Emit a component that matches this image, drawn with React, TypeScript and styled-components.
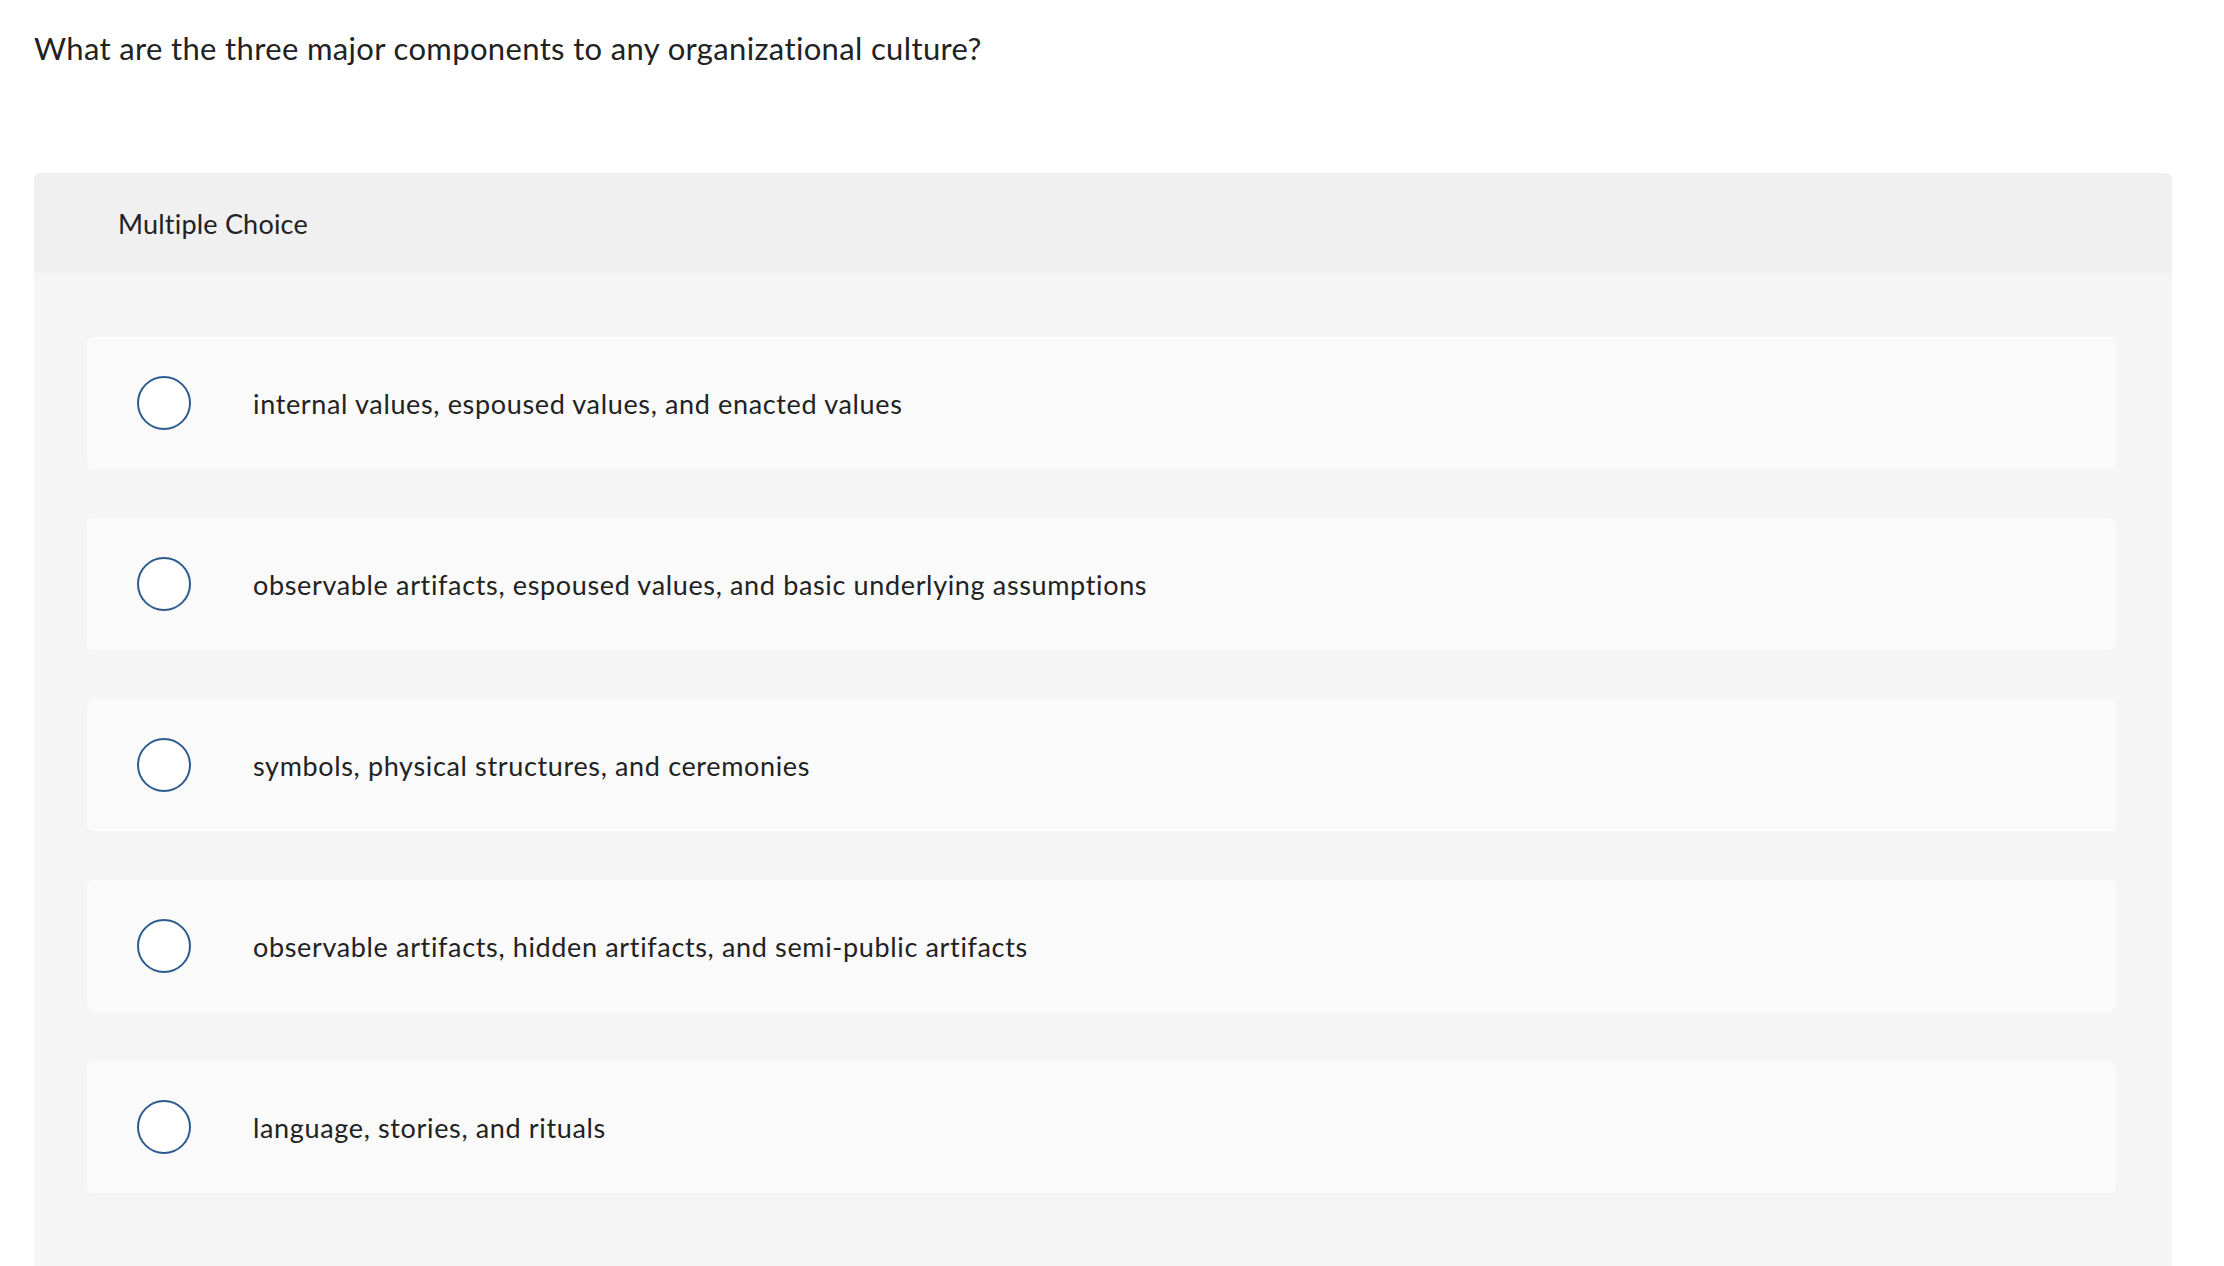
import styled, { createGlobalStyle } from "styled-components";

const GlobalStyle = createGlobalStyle`
  html, body {
    margin: 0;
    padding: 0;
    background: #ffffff;
    font-family: "Lato", "Liberation Sans", sans-serif;
    color: #222222;
  }
`;

const options = [
  "internal values, espoused values, and enacted values",
  "observable artifacts, espoused values, and basic underlying assumptions",
  "symbols, physical structures, and ceremonies",
  "observable artifacts, hidden artifacts, and semi-public artifacts",
  "language, stories, and rituals",
];

export default function App() {
  return (
    <>
      <GlobalStyle />
      <Page>
        <Question>
          What are the three major components to any organizational culture?
        </Question>
        <Panel>
          <PanelHeader>Multiple Choice</PanelHeader>
          <OptionList>
            {options.map((text) => (
              <OptionCard key={text}>
                <Radio type="button" aria-label={text} />
                <OptionText>{text}</OptionText>
              </OptionCard>
            ))}
          </OptionList>
        </Panel>
      </Page>
    </>
  );
}

const Page = styled.main`
  padding: 30px 52px 0 34px;
`;

const Question = styled.h1`
  margin: 0;
  font-size: 31px;
  font-weight: 400;
  line-height: 36px;
  letter-spacing: 0.35px;
  color: #222222;
`;

const Panel = styled.section`
  margin-top: 107px;
  border-radius: 6px 6px 0 0;
  overflow: hidden;
  background: #f5f5f5;
`;

const PanelHeader = styled.header`
  display: flex;
  align-items: center;
  height: 100px;
  padding-left: 84px;
  background: #f0f0f0;
  font-size: 27px;
  letter-spacing: 0.2px;
  color: #222222;
`;

const OptionList = styled.div`
  display: flex;
  flex-direction: column;
  gap: 49px;
  padding: 64px 56px 90px 53px;
`;

const OptionCard = styled.label`
  display: flex;
  align-items: center;
  height: 132px;
  padding-left: 50px;
  border-radius: 6px;
  background: #fafafa;
  cursor: pointer;
`;

const Radio = styled.button`
  flex: none;
  width: 54px;
  height: 54px;
  padding: 0;
  border: 2px solid #2b5a8e;
  border-radius: 50%;
  background: #ffffff;
  cursor: pointer;
`;

const OptionText = styled.span`
  margin-left: 62px;
  font-size: 27px;
  letter-spacing: 0.65px;
  color: #222222;
`;
